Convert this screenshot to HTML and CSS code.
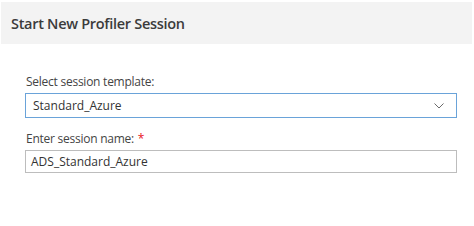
FILE: index.html
```html
<!DOCTYPE html>
<html>
<head>
<meta charset="utf-8">
<link rel="stylesheet" href="styles.css">
</head>
<body>
<div class="header"><span class="title">Start New Profiler Session</span></div>
<div class="form">
  <div class="label">Select session template:</div>
  <div class="select">
    <span class="value">Standard_Azure</span>
    <svg class="chev" width="10" height="6" viewBox="0 0 10 6"><path d="M0.5 0.5 L5 5 L9.5 0.5" fill="none" stroke="#6b6b6b" stroke-width="1"/></svg>
  </div>
  <div class="label label2">Enter session name: <span class="req">*</span></div>
  <div class="input"><span class="value">ADS_Standard_Azure</span></div>
</div>
</body>
</html>
```
FILE: styles.css
```css
html, body { margin: 0; padding: 0; background: #fff; }
body {
  padding: 2px 2px 0 1px;
  font-family: "Open Sans", "Noto Sans", sans-serif;
  color: #333;
}
.header {
  height: 42px;
  background: #f3f3f3;
  display: flex;
  align-items: center;
  padding-left: 10px;
}
.title {
  font-size: 14.5px;
  font-weight: 600;
  letter-spacing: -0.3px;
  color: #3b3b3b;
}
.form {
  padding: 29px 15px 0 24px;
}
.label {
  font-size: 12px;
  letter-spacing: -0.25px;
  line-height: 17px;
  color: #444;
  padding-left: 1px;
  margin-bottom: 3px;
}
.label2 { margin-top: 12px; margin-bottom: 3px; }
.req { color: #e81123; margin-left: 1px; }
.select {
  height: 23px;
  border: 1px solid #6aa3d9;
  display: flex;
  align-items: center;
  justify-content: space-between;
  padding: 0 12px 0 7px;
}
.input {
  height: 21px;
  border: 1px solid #bdbdbd;
  display: flex;
  align-items: center;
  padding: 0 5px;
}
.value {
  font-size: 12px;
  color: #333;
}
```
